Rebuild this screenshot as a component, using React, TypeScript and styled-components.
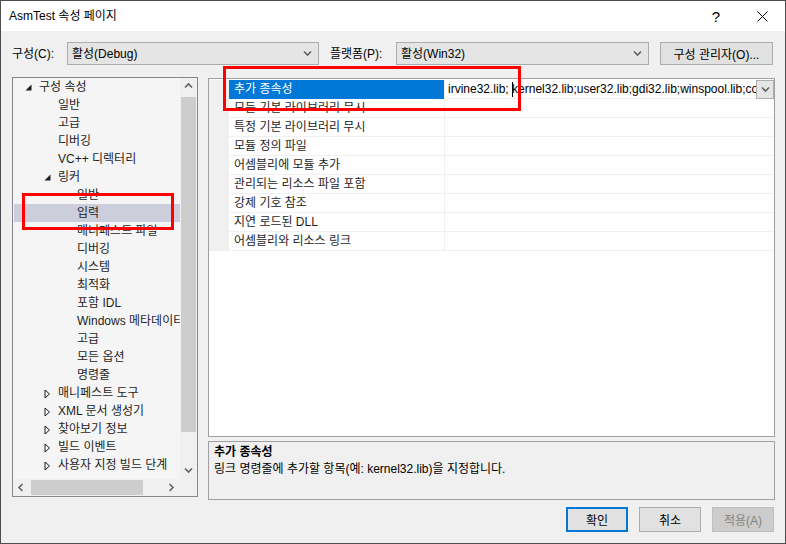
import React from 'react';
import styled, { createGlobalStyle } from 'styled-components';

const GlobalStyle = createGlobalStyle`
  html, body {
    margin: 0;
    padding: 0;
    background: #ffffff;
  }
  body {
    font-family: "Liberation Sans", "Noto Sans CJK KR", sans-serif;
    font-size: 12px;
    color: #000000;
  }
  * {
    box-sizing: border-box;
  }
`;

const Window = styled.div`
  position: relative;
  width: 786px;
  height: 544px;
  border: 1px solid #4d4d4d;
  background: #f0f0f0;
  display: flex;
  flex-direction: column;
  overflow: hidden;
`;

const TitleBar = styled.div`
  height: 30px;
  background: #ffffff;
  display: flex;
  align-items: center;
  padding-left: 8px;
`;

const Title = styled.div`
  flex: 1;
  line-height: 16px;
`;

const TitleButton = styled.div`
  width: 46px;
  height: 30px;
  display: flex;
  align-items: center;
  justify-content: center;
  font-size: 15px;
`;

const Body = styled.div`
  flex: 1;
  display: flex;
  flex-direction: column;
  padding: 11px 10px 0 11px;
`;

const TopRow = styled.div`
  display: flex;
  align-items: center;
  height: 23px;
`;

const FieldLabel = styled.label<{ $width: number; $gap?: number }>`
  width: ${(p) => p.$width}px;
  flex: none;
  margin-left: ${(p) => p.$gap || 0}px;
  line-height: 16px;
  white-space: nowrap;
`;

const Combo = styled.div<{ $width: number }>`
  width: ${(p) => p.$width}px;
  flex: none;
  height: 23px;
  background: #e5e5e5;
  border: 1px solid #acacac;
  display: flex;
  align-items: center;
  padding: 0 6px 0 4px;
  span {
    flex: 1;
    line-height: 16px;
  }
`;

const Button = styled.button<{ $width: number; $default?: boolean }>`
  width: ${(p) => p.$width}px;
  flex: none;
  height: 25px;
  font-family: inherit;
  font-size: 12px;
  color: #000;
  background: #e1e1e1;
  border: ${(p) => (p.$default ? '2px solid #0078d7' : '1px solid #adadad')};
  padding: 0;
  &:disabled {
    background: #cccccc;
    border-color: #bfbfbf;
    color: #838383;
  }
`;

const ManagerButton = styled(Button)`
  height: 23px;
  margin-left: 11px;
`;

const Main = styled.div`
  display: flex;
  gap: 10px;
  margin-top: 12px;
  align-items: flex-start;
`;

const TreePanel = styled.div`
  width: 186px;
  flex: none;
  height: 420px;
  border: 1px solid #828790;
  background: #f5f5f5;
  display: grid;
  grid-template-columns: 1fr 17px;
  grid-template-rows: 1fr 17px;
`;

const TreeList = styled.div`
  overflow: hidden;
  min-width: 0;
`;

const TreeRow = styled.div<{ $level: number; $selected?: boolean }>`
  height: 18px;
  display: flex;
  align-items: center;
  padding-left: ${(p) => 11 + p.$level * 19}px;
  margin-left: 1px;
  background: ${(p) => (p.$selected ? '#cccedb' : 'transparent')};
  white-space: nowrap;
  color: #1e1e1e;
  line-height: 16px;
`;

const Expander = styled.span`
  width: 14px;
  flex: none;
  display: flex;
  align-items: center;
  padding-top: 1px;
`;

const VScroll = styled.div`
  background: #f0f0f0;
  display: flex;
  flex-direction: column;
`;

const HScroll = styled.div`
  background: #f0f0f0;
  display: flex;
  min-width: 0;
`;

const ScrollArrow = styled.div`
  width: 17px;
  height: 17px;
  flex: none;
  display: flex;
  align-items: center;
  justify-content: center;
`;

const VTrack = styled.div`
  flex: 1;
  padding: 2px 1px 0 1px;
`;

const VThumb = styled.div`
  height: 335px;
  background: #cdcdcd;
`;

const HTrack = styled.div`
  flex: 1;
  padding: 1px 0 1px 1px;
`;

const HThumb = styled.div`
  width: 112px;
  height: 15px;
  background: #cdcdcd;
`;

const Corner = styled.div`
  background: #f0f0f0;
`;

const RightColumn = styled.div`
  flex: 1;
  min-width: 0;
  display: flex;
  flex-direction: column;
  gap: 4px;
  padding-top: 1px;
`;

const PropGrid = styled.div`
  height: 359px;
  border: 1px solid #a0a0a0;
  background: #ffffff;
  padding-top: 1px;
  overflow: hidden;
`;

const PropRow = styled.div`
  display: flex;
  height: 19px;
`;

const Strip = styled.div`
  width: 20px;
  flex: none;
  background: #f0f0f0;
`;

const NameCell = styled.div<{ $selected?: boolean }>`
  width: 215px;
  flex: none;
  padding-left: 5px;
  display: flex;
  align-items: center;
  background: ${(p) => (p.$selected ? '#0078d7' : '#ffffff')};
  color: ${(p) => (p.$selected ? '#ffffff' : '#1e1e1e')};
  border-bottom: 1px solid ${(p) => (p.$selected ? '#0078d7' : '#f0f0f0')};
  white-space: nowrap;
  line-height: 16px;
`;

const ValueCell = styled.div`
  flex: 1;
  display: flex;
  border-left: 1px solid #f0f0f0;
  border-bottom: 1px solid #f0f0f0;
  min-width: 0;
`;

const ValueText = styled.div`
  flex: 1;
  min-width: 0;
  overflow: hidden;
  white-space: nowrap;
  padding-left: 3px;
  display: flex;
  align-items: center;
  line-height: 16px;
`;

const Caret = styled.span`
  display: inline-block;
  flex: none;
  width: 0;
  height: 15px;
  border-left: 1px solid #000;
  margin-right: -1px;
`;

const DropButton = styled.div`
  width: 18px;
  height: 19px;
  flex: none;
  margin-bottom: -1px;
  background: #e5e5e5;
  border: 1px solid #adadad;
  display: flex;
  align-items: center;
  justify-content: center;
`;

const Description = styled.div`
  height: 59px;
  border: 1px solid #a0a0a0;
  background: #f0f0f0;
  padding: 2px 5px;
  line-height: 17px;
  b {
    font-weight: bold;
    display: block;
  }
`;

const Footer = styled.div`
  display: flex;
  justify-content: flex-end;
  gap: 11px;
  margin-top: 7px;
  padding-right: 1px;
`;

const Highlight = styled.div<{ $x: number; $y: number; $w: number; $h: number }>`
  position: absolute;
  left: ${(p) => p.$x}px;
  top: ${(p) => p.$y}px;
  width: ${(p) => p.$w}px;
  height: ${(p) => p.$h}px;
  border: 3px solid #ff0000;
  pointer-events: none;
`;

const Chevron = ({ dir, color = '#606060' }: { dir: 'up' | 'down' | 'left' | 'right'; color?: string }) => {
  const paths = {
    up: 'M1 5.5 L4.5 2 L8 5.5',
    down: 'M1 2.5 L4.5 6 L8 2.5',
    left: 'M5.5 1 L2 4.5 L5.5 8',
    right: 'M2.5 1 L6 4.5 L2.5 8',
  };
  return (
    <svg width="9" height="9" viewBox="0 0 9 9">
      <path d={paths[dir]} fill="none" stroke={color} strokeWidth="1.6" />
    </svg>
  );
};

type TreeItem = { label: string; level: number; arrow?: 'open' | 'closed'; selected?: boolean };

const treeItems: TreeItem[] = [
  { label: '구성 속성', level: 0, arrow: 'open' },
  { label: '일반', level: 1 },
  { label: '고급', level: 1 },
  { label: '디버깅', level: 1 },
  { label: 'VC++ 디렉터리', level: 1 },
  { label: '링커', level: 1, arrow: 'open' },
  { label: '일반', level: 2 },
  { label: '입력', level: 2, selected: true },
  { label: '매니페스트 파일', level: 2 },
  { label: '디버깅', level: 2 },
  { label: '시스템', level: 2 },
  { label: '최적화', level: 2 },
  { label: '포함 IDL', level: 2 },
  { label: 'Windows 메타데이터', level: 2 },
  { label: '고급', level: 2 },
  { label: '모든 옵션', level: 2 },
  { label: '명령줄', level: 2 },
  { label: '매니페스트 도구', level: 1, arrow: 'closed' },
  { label: 'XML 문서 생성기', level: 1, arrow: 'closed' },
  { label: '찾아보기 정보', level: 1, arrow: 'closed' },
  { label: '빌드 이벤트', level: 1, arrow: 'closed' },
  { label: '사용자 지정 빌드 단계', level: 1, arrow: 'closed' },
];

const properties = [
  '추가 종속성',
  '모든 기본 라이브러리 무시',
  '특정 기본 라이브러리 무시',
  '모듈 정의 파일',
  '어셈블리에 모듈 추가',
  '관리되는 리소스 파일 포함',
  '강제 기호 참조',
  '지연 로드된 DLL',
  '어셈블리와 리소스 링크',
];

const Arrow = ({ kind }: { kind?: 'open' | 'closed' }) => {
  if (kind === 'open')
    return (
      <svg width="7" height="7" viewBox="0 0 7 7">
        <path d="M6.5 0.5 L6.5 6.5 L0.5 6.5 Z" fill="#1e1e1e" />
      </svg>
    );
  if (kind === 'closed')
    return (
      <svg width="7" height="10" viewBox="0 0 7 10">
        <path d="M1 1 L5.5 5 L1 9 Z" fill="none" stroke="#1e1e1e" strokeWidth="1" />
      </svg>
    );
  return null;
};

const App = () => {
  return (
    <>
      <GlobalStyle />
      <Window>
        <TitleBar>
          <Title>AsmTest 속성 페이지</Title>
          <TitleButton>?</TitleButton>
          <TitleButton>
            <svg width="11" height="11" viewBox="0 0 11 11">
              <path d="M0.5 0.5 L10.5 10.5 M10.5 0.5 L0.5 10.5" stroke="#000" strokeWidth="1" />
            </svg>
          </TitleButton>
        </TitleBar>
        <Body>
          <TopRow>
            <FieldLabel $width={55}>구성(C):</FieldLabel>
            <Combo $width={252}>
              <span>활성(Debug)</span>
              <Chevron dir="down" />
            </Combo>
            <FieldLabel $width={66} $gap={11}>
              플랫폼(P):
            </FieldLabel>
            <Combo $width={253}>
              <span>활성(Win32)</span>
              <Chevron dir="down" />
            </Combo>
            <ManagerButton $width={113}>구성 관리자(O)...</ManagerButton>
          </TopRow>

          <Main>
            <TreePanel>
              <TreeList>
                {treeItems.map((item, i) => (
                  <TreeRow key={i} $level={item.level} $selected={item.selected}>
                    <Expander>
                      <Arrow kind={item.arrow} />
                    </Expander>
                    {item.label}
                  </TreeRow>
                ))}
              </TreeList>
              <VScroll>
                <ScrollArrow>
                  <Chevron dir="up" />
                </ScrollArrow>
                <VTrack>
                  <VThumb />
                </VTrack>
                <ScrollArrow>
                  <Chevron dir="down" />
                </ScrollArrow>
              </VScroll>
              <HScroll>
                <ScrollArrow>
                  <Chevron dir="left" />
                </ScrollArrow>
                <HTrack>
                  <HThumb />
                </HTrack>
                <ScrollArrow>
                  <Chevron dir="right" />
                </ScrollArrow>
              </HScroll>
              <Corner />
            </TreePanel>

            <RightColumn>
              <PropGrid>
                {properties.map((name, i) => (
                  <PropRow key={name}>
                    <Strip />
                    <NameCell $selected={i === 0}>{name}</NameCell>
                    <ValueCell>
                      {i === 0 && (
                        <>
                          <ValueText>
                            irvine32.lib;&nbsp;
                            <Caret />
                            kernel32.lib;user32.lib;gdi32.lib;winspool.lib;comdlg32.lib;advapi32.lib
                          </ValueText>
                          <DropButton>
                            <Chevron dir="down" />
                          </DropButton>
                        </>
                      )}
                    </ValueCell>
                  </PropRow>
                ))}
              </PropGrid>
              <Description>
                <b>추가 종속성</b>
                링크 명령줄에 추가할 항목(예: kernel32.lib)을 지정합니다.
              </Description>
            </RightColumn>
          </Main>

          <Footer>
            <Button $width={62} $default>
              확인
            </Button>
            <Button $width={62}>취소</Button>
            <Button $width={62} disabled>
              적용(A)
            </Button>
          </Footer>
        </Body>

        <Highlight $x={222} $y={65} $w={298} $h={45} />
        <Highlight $x={21} $y={192} $w={152} $h={37} />
      </Window>
    </>
  );
};

export default App;
